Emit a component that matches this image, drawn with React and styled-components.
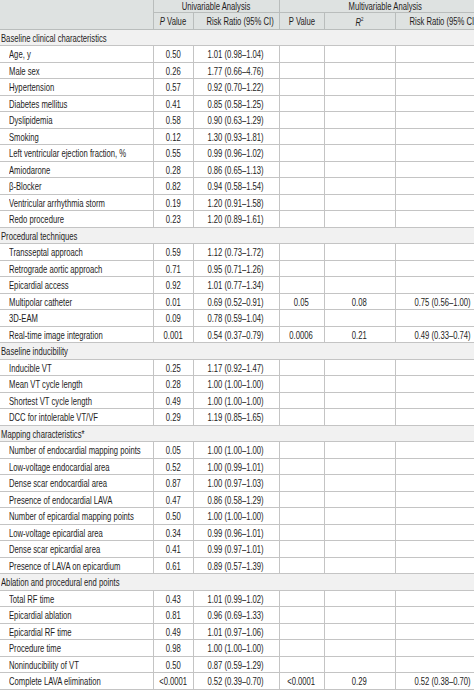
import React from "react";
import styled, { createGlobalStyle } from "styled-components";

const GlobalStyle = createGlobalStyle`
  html, body {
    margin: 0;
    padding: 0;
    background: #fff;
    overflow: hidden;
  }
  body {
    font-family: "Liberation Sans", Arial, sans-serif;
    color: #1e1c1c;
  }
`;

const sections = [
  {
    title: "Baseline clinical characteristics",
    rows: [
      ["Age, y", "0.50", "1.01 (0.98–1.04)"],
      ["Male sex", "0.26", "1.77 (0.66–4.76)"],
      ["Hypertension", "0.57", "0.92 (0.70–1.22)"],
      ["Diabetes mellitus", "0.41", "0.85 (0.58–1.25)"],
      ["Dyslipidemia", "0.58", "0.90 (0.63–1.29)"],
      ["Smoking", "0.12", "1.30 (0.93–1.81)"],
      ["Left ventricular ejection fraction, %", "0.55", "0.99 (0.96–1.02)"],
      ["Amiodarone", "0.28", "0.86 (0.65–1.13)"],
      ["β-Blocker", "0.82", "0.94 (0.58–1.54)"],
      ["Ventricular arrhythmia storm", "0.19", "1.20 (0.91–1.58)"],
      ["Redo procedure", "0.23", "1.20 (0.89–1.61)"],
    ],
  },
  {
    title: "Procedural techniques",
    rows: [
      ["Transseptal approach", "0.59", "1.12 (0.73–1.72)"],
      ["Retrograde aortic approach", "0.71", "0.95 (0.71–1.26)"],
      ["Epicardial access", "0.92", "1.01 (0.77–1.34)"],
      ["Multipolar catheter", "0.01", "0.69 (0.52–0.91)", "0.05", "0.08", "0.75 (0.56–1.00)"],
      ["3D-EAM", "0.09", "0.78 (0.59–1.04)"],
      ["Real-time image integration", "0.001", "0.54 (0.37–0.79)", "0.0006", "0.21", "0.49 (0.33–0.74)"],
    ],
  },
  {
    title: "Baseline inducibility",
    rows: [
      ["Inducible VT", "0.25", "1.17 (0.92–1.47)"],
      ["Mean VT cycle length", "0.28", "1.00 (1.00–1.00)"],
      ["Shortest VT cycle length", "0.49", "1.00 (1.00–1.00)"],
      ["DCC for intolerable VT/VF", "0.29", "1.19 (0.85–1.65)"],
    ],
  },
  {
    title: "Mapping characteristics*",
    rows: [
      ["Number of endocardial mapping points", "0.05", "1.00 (1.00–1.00)"],
      ["Low-voltage endocardial area", "0.52", "1.00 (0.99–1.01)"],
      ["Dense scar endocardial area", "0.87", "1.00 (0.97–1.03)"],
      ["Presence of endocardial LAVA", "0.47", "0.86 (0.58–1.29)"],
      ["Number of epicardial mapping points", "0.50", "1.00 (1.00–1.00)"],
      ["Low-voltage epicardial area", "0.34", "0.99 (0.96–1.01)"],
      ["Dense scar epicardial area", "0.41", "0.99 (0.97–1.01)"],
      ["Presence of LAVA on epicardium", "0.61", "0.89 (0.57–1.39)"],
    ],
  },
  {
    title: "Ablation and procedural end points",
    rows: [
      ["Total RF time", "0.43", "1.01 (0.99–1.02)"],
      ["Epicardial ablation", "0.81", "0.96 (0.69–1.33)"],
      ["Epicardial RF time", "0.49", "1.01 (0.97–1.06)"],
      ["Procedure time", "0.98", "1.00 (1.00–1.00)"],
      ["Noninducibility of VT", "0.50", "0.87 (0.59–1.29)"],
      ["Complete LAVA elimination", "<0.0001", "0.52 (0.39–0.70)", "<0.0001", "0.29", "0.52 (0.38–0.70)"],
    ],
  },
];

const Table = styled.table`
  width: 491px;
  border-collapse: collapse;
  table-layout: fixed;
  font-size: 10.5px;
`;

const Col = styled.col`
  width: ${(p) => p.$w}px;
`;

// condensed face: the reference uses a narrow grotesque
const Txt = styled.span`
  display: inline-block;
  white-space: nowrap;
  transform: scaleX(0.73);
  transform-origin: ${(p) => (p.$left ? "left center" : "center center")};
`;

const HeadRow = styled.tr`
  height: ${(p) => p.$h}px;
  background: #dee2e1;
`;

const Th = styled.th`
  font-weight: normal;
  text-align: center;
  padding: 0;
  line-height: 10px;
  white-space: nowrap;
  border: 1px solid #b9bdbc;
  border-top: none;
  &:first-child {
    border-left: none;
  }
`;

const SectionRow = styled.tr`
  height: 16.5px;
  background: #f1f1f1;
`;

const SectionCell = styled.td`
  padding: 0 0 0 1px;
  line-height: 10px;
  white-space: nowrap;
  border-top: 1px solid #c4c4c4;
  border-bottom: 1px solid #c4c4c4;
`;

const ItemRow = styled.tr`
  height: 16.5px;
  background: #fff;
`;

const Cell = styled.td`
  padding: ${(p) => (p.$label ? "0 0 0 9px" : "0")};
  text-align: ${(p) => (p.$label ? "left" : "center")};
  line-height: 10px;
  white-space: nowrap;
  border: 1px solid #c4c4c4;
  &:first-child {
    border-left: none;
  }
`;

const Italic = styled.i`
  font-style: italic;
`;

const Sup = styled.sup`
  font-size: 6px;
`;

export default function App() {
  return (
    <>
      <GlobalStyle />
      <Table>
        <colgroup>
          <Col $w={153} />
          <Col $w={40} />
          <Col $w={86} />
          <Col $w={45} />
          <Col $w={71} />
          <Col $w={96} />
        </colgroup>
        <thead>
          <HeadRow $h={12}>
            <Th rowSpan={2} />
            <Th colSpan={2}>
              <Txt>Univariable Analysis</Txt>
            </Th>
            <Th colSpan={3}>
              <Txt>Multivariable Analysis</Txt>
            </Th>
          </HeadRow>
          <HeadRow $h={17.3}>
            <Th>
              <Txt>
                <Italic>P</Italic> Value
              </Txt>
            </Th>
            <Th>
              <Txt>Risk Ratio (95% CI)</Txt>
            </Th>
            <Th>
              <Txt>P Value</Txt>
            </Th>
            <Th>
              <Txt>
                <Italic>R</Italic>
                <Sup>2</Sup>
              </Txt>
            </Th>
            <Th>
              <Txt>Risk Ratio (95% CI)</Txt>
            </Th>
          </HeadRow>
        </thead>
        <tbody>
          {sections.map((s) => (
            <React.Fragment key={s.title}>
              <SectionRow>
                <SectionCell colSpan={6}>
                  <Txt $left>{s.title}</Txt>
                </SectionCell>
              </SectionRow>
              {s.rows.map((r) => (
                <ItemRow key={r[0]}>
                  <Cell $label>
                    <Txt $left>{r[0]}</Txt>
                  </Cell>
                  {[1, 2, 3, 4, 5].map((i) => (
                    <Cell key={i}>{r[i] ? <Txt>{r[i]}</Txt> : null}</Cell>
                  ))}
                </ItemRow>
              ))}
            </React.Fragment>
          ))}
        </tbody>
      </Table>
    </>
  );
}
